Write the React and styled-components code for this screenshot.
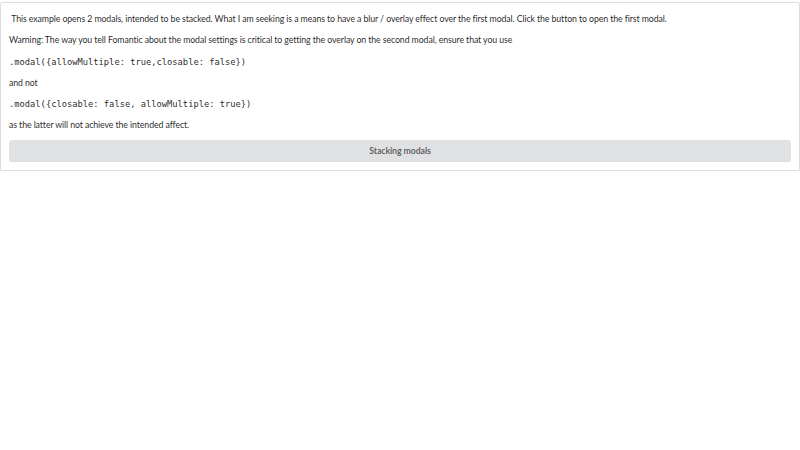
import styled, { createGlobalStyle } from "styled-components";

const GlobalStyle = createGlobalStyle`
  html, body {
    margin: 0;
    padding: 0;
    background: #ffffff;
  }
  body {
    font-family: Lato, "Helvetica Neue", Arial, sans-serif;
    font-size: 8.75px;
    line-height: 1.4285em;
    color: rgba(0, 0, 0, 0.87);
  }
`;

const Segment = styled.div`
  margin: 2px 0 0;
  padding: 10px 8px 7.5px;
  background: #fff;
  border: 1px solid rgba(34, 36, 38, 0.15);
  border-radius: 2.5px;
  box-shadow: 0 1px 2px 0 rgba(34, 36, 38, 0.15);
`;

const Para = styled.p`
  margin: 0 0 ${(p) => (p.$last ? "7.75px" : "1em")};
  line-height: 1.4285em;
  letter-spacing: -0.09px;
  white-space: pre-wrap;
`;

const Code = styled.code`
  font-family: "DejaVu Sans Mono", monospace;
  font-size: 1em;
  letter-spacing: 0;
  color: rgba(0, 0, 0, 0.87);
`;

const Button = styled.button`
  display: block;
  width: 100%;
  margin: 0;
  padding: 7px 1.5em;
  border: none;
  border-radius: 2.5px;
  background: #e0e1e2;
  color: rgba(0, 0, 0, 0.6);
  font-family: Lato, "Helvetica Neue", Arial, sans-serif;
  font-size: 1em;
  font-weight: 700;
  line-height: 1em;
  letter-spacing: -0.09px;
  cursor: pointer;
`;

export default function App() {
  return (
    <>
      <GlobalStyle />
      <Segment>
        <Para>
          {" "}This example opens 2 modals, intended to be stacked. What I am seeking is a means to have a blur / overlay effect over the first modal. Click the button to open the first modal.
        </Para>
        <Para>
          Warning: The way you tell Fomantic about the modal settings is critical to getting the overlay on the second modal, ensure that you use
        </Para>
        <Para>
          <Code>.modal({"{"}allowMultiple: true,closable: false{"}"})</Code>
        </Para>
        <Para>and not</Para>
        <Para>
          <Code>.modal({"{"}closable: false, allowMultiple: true{"}"})</Code>
        </Para>
        <Para $last>as the latter will not achieve the intended affect.</Para>
        <Button>Stacking modals</Button>
      </Segment>
    </>
  );
}
